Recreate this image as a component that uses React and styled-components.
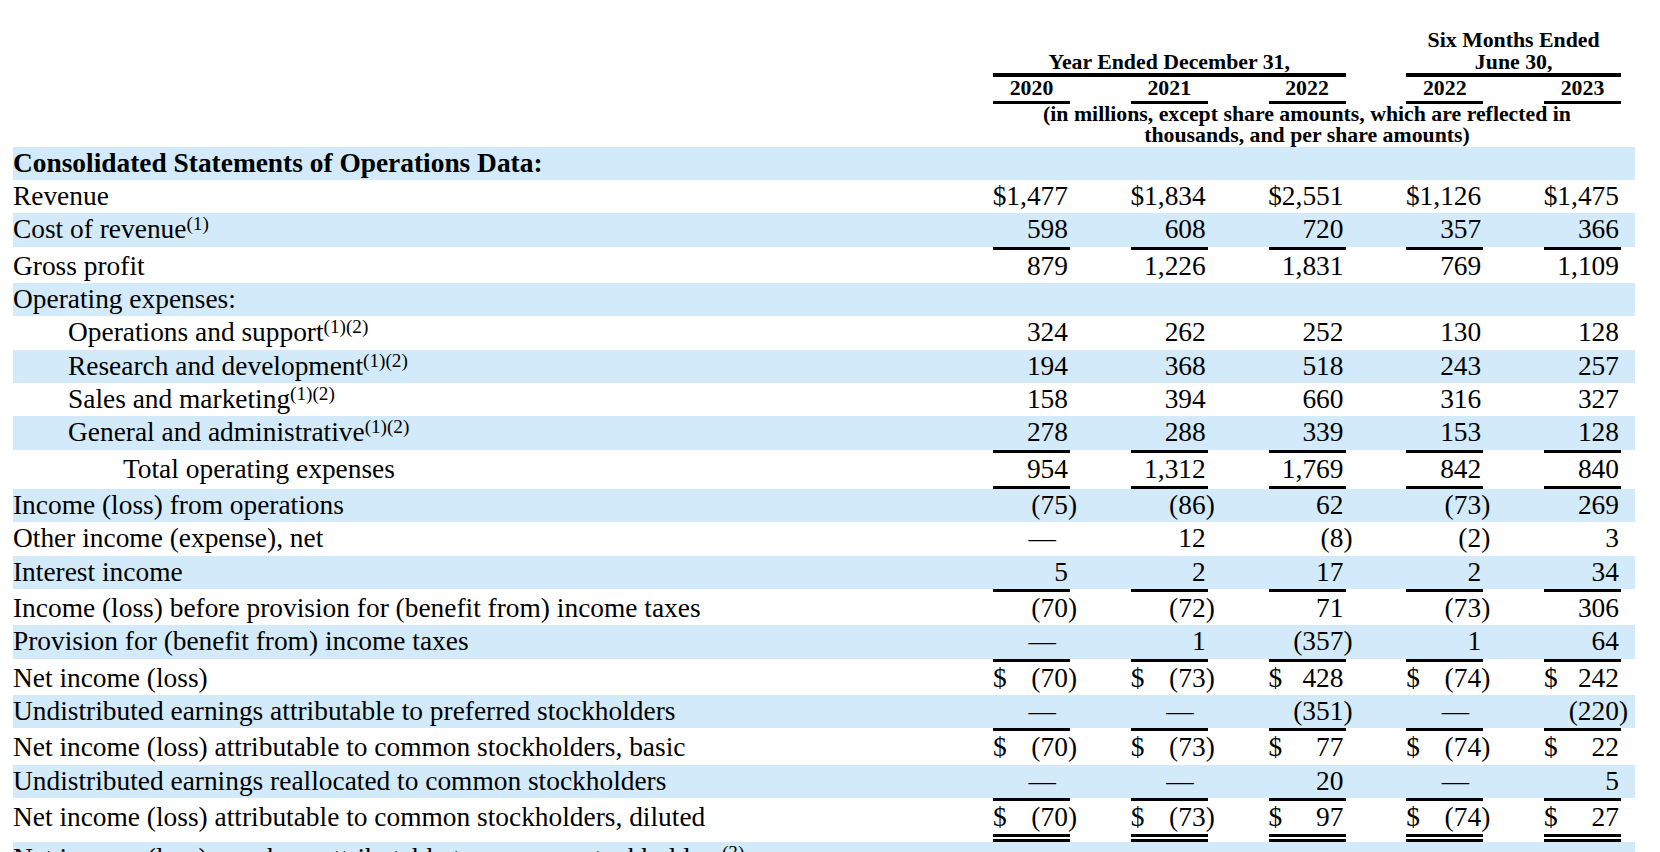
import React from "react";
import styled, { createGlobalStyle } from "styled-components";

const GlobalStyle = createGlobalStyle`
  html, body {
    margin: 0;
    padding: 0;
    background: #ffffff;
  }
  body {
    font-family: "Liberation Serif", "Times New Roman", serif;
    color: #000000;
  }
`;

const COLS = "980px repeat(4, 77px 60.75px) 77px 14px";
const SHADE = "#d2eaf9";

const Page = styled.div`
  padding: 30px 0 0 13px;
  width: 1622px;
`;

const HeaderGrid = styled.div`
  display: grid;
  grid-template-columns: ${COLS};
  font-weight: 700;
  font-size: 21.8px;
  line-height: 21.5px;
  text-align: center;
`;

const SpanHead = styled.div`
  grid-column: ${(p) => p.$cols};
  grid-row: 1;
  align-self: end;
  border-bottom: 4px solid #000;
`;

const YearCell = styled.div`
  grid-column: ${(p) => p.$col};
  grid-row: 2;
  line-height: 23.5px;
  border-bottom: 3px solid #000;
`;

const Units = styled.div`
  grid-column: 2 / 11;
  grid-row: 3;
  white-space: nowrap;
`;

const Row = styled.div`
  display: grid;
  grid-template-columns: ${COLS};
  background: ${(p) => (p.$shade ? SHADE : "transparent")};
  font-size: 27.4px;
  line-height: 33.35px;
  white-space: nowrap;
`;

const Label = styled.div`
  padding-left: ${(p) => p.$indent * 55}px;
  font-weight: ${(p) => (p.$bold ? 700 : 400)};
  border-top: ${(p) => (p.$top ? "3px solid transparent" : "0")};
`;

const Sup = styled.sup`
  font-size: 0.7em;
  line-height: 0;
  vertical-align: 0.4em;
`;

const Value = styled.div`
  display: flex;
  justify-content: ${(p) => (p.$cur ? "space-between" : "flex-end")};
  padding-right: 2px;
  border-top: ${(p) => (p.$top ? "3px solid #000" : "0")};
  border-bottom: ${(p) =>
    p.$double ? "8px double #000" : p.$bottom ? "3px solid #000" : "0"};
`;

const Gap = styled.div``;

const Paren = styled.span`
  margin-right: -9px;
`;

const Dash = styled.span`
  margin-right: 12px;
`;

const years = [
  { col: 2, y: "2020" },
  { col: 4, y: "2021" },
  { col: 6, y: "2022" },
  { col: 8, y: "2022" },
  { col: 10, y: "2023" },
];

const rows = [
  { label: "Consolidated Statements of Operations Data:", bold: true, shade: true },
  { label: "Revenue", values: ["$1,477", "$1,834", "$2,551", "$1,126", "$1,475"] },
  { label: "Cost of revenue", sup: "(1)", shade: true, values: ["598", "608", "720", "357", "366"] },
  { label: "Gross profit", top: true, values: ["879", "1,226", "1,831", "769", "1,109"] },
  { label: "Operating expenses:", shade: true },
  { label: "Operations and support", sup: "(1)(2)", indent: 1, values: ["324", "262", "252", "130", "128"] },
  { label: "Research and development", sup: "(1)(2)", indent: 1, shade: true, values: ["194", "368", "518", "243", "257"] },
  { label: "Sales and marketing", sup: "(1)(2)", indent: 1, values: ["158", "394", "660", "316", "327"] },
  { label: "General and administrative", sup: "(1)(2)", indent: 1, shade: true, values: ["278", "288", "339", "153", "128"] },
  { label: "Total operating expenses", indent: 2, top: true, bottom: true, values: ["954", "1,312", "1,769", "842", "840"] },
  { label: "Income (loss) from operations", shade: true, values: ["(75)", "(86)", "62", "(73)", "269"] },
  { label: "Other income (expense), net", values: ["—", "12", "(8)", "(2)", "3"] },
  { label: "Interest income", shade: true, values: ["5", "2", "17", "2", "34"] },
  { label: "Income (loss) before provision for (benefit from) income taxes", top: true, values: ["(70)", "(72)", "71", "(73)", "306"] },
  { label: "Provision for (benefit from) income taxes", shade: true, values: ["—", "1", "(357)", "1", "64"] },
  { label: "Net income (loss)", top: true, cur: true, values: ["(70)", "(73)", "428", "(74)", "242"] },
  { label: "Undistributed earnings attributable to preferred stockholders", shade: true, values: ["—", "—", "(351)", "—", "(220)"] },
  { label: "Net income (loss) attributable to common stockholders, basic", top: true, cur: true, values: ["(70)", "(73)", "77", "(74)", "22"] },
  { label: "Undistributed earnings reallocated to common stockholders", shade: true, values: ["—", "—", "20", "—", "5"] },
  { label: "Net income (loss) attributable to common stockholders, diluted", top: true, double: true, cur: true, values: ["(70)", "(73)", "97", "(74)", "27"] },
  { label: "Net income (loss) per share attributable to common stockholders", sup: "(3)", shade: true },
];

const Amount = ({ text }) => {
  if (text === "—") return <Dash>—</Dash>;
  if (text.endsWith(")")) {
    return (
      <span>
        {text.slice(0, -1)}
        <Paren>)</Paren>
      </span>
    );
  }
  return <span>{text}</span>;
};

const StatementRow = ({ row }) => {
  const values = row.values || ["", "", "", "", ""];
  return (
    <Row $shade={row.shade}>
      <Label $indent={row.indent || 0} $bold={row.bold} $top={row.top}>
        {row.label}
        {row.sup && <Sup>{row.sup}</Sup>}
      </Label>
      {values.map((v, i) => (
        <React.Fragment key={i}>
          <Value
            $cur={row.cur}
            $top={row.top && row.values}
            $bottom={row.bottom}
            $double={row.double}
          >
            {row.cur && <span>$</span>}
            {v && <Amount text={v} />}
          </Value>
          <Gap />
        </React.Fragment>
      ))}
    </Row>
  );
};

export default function App() {
  return (
    <>
      <GlobalStyle />
      <Page>
        <HeaderGrid>
          <SpanHead $cols="2 / 7">Year Ended December 31,</SpanHead>
          <SpanHead $cols="8 / 11">
            Six Months Ended
            <br />
            June 30,
          </SpanHead>
          {years.map((y) => (
            <YearCell key={y.col} $col={y.col}>
              {y.y}
            </YearCell>
          ))}
          <Units>
            (in millions, except share amounts, which are reflected in
            <br />
            thousands, and per share amounts)
          </Units>
        </HeaderGrid>
        {rows.map((row, i) => (
          <StatementRow key={i} row={row} />
        ))}
      </Page>
    </>
  );
}
